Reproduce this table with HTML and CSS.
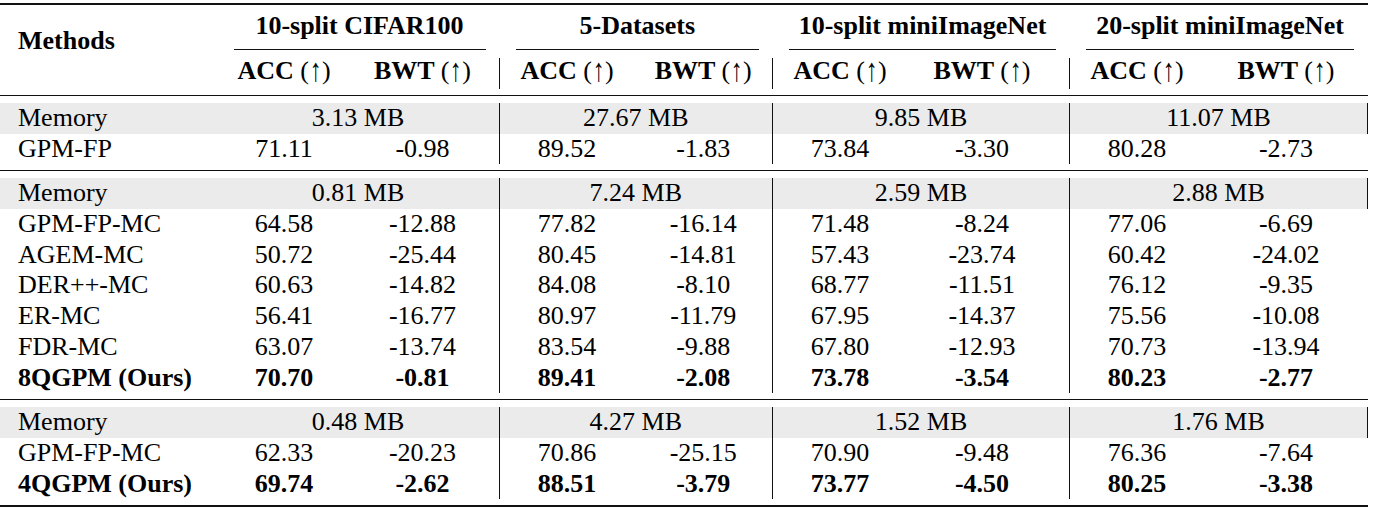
FILE: index.html
```html
<!DOCTYPE html>
<html lang="en">
<head>
<meta charset="utf-8">
<title>Results table</title>
<link rel="stylesheet" href="styles.css">
</head>
<body>
<div class="table">
  <div class="head">
    <div class="methods">Methods</div>
    <div class="title">10-split CIFAR100</div>
    <div class="title">5-Datasets</div>
    <div class="title">10-split miniImageNet</div>
    <div class="title">20-split miniImageNet</div>
    <div class="sub">ACC <span class="arr">(<span class="up">↑</span>)</span></div>
    <div class="sub sep shift-s">BWT <span class="arr">(<span class="up">↑</span>)</span></div>
    <div class="sub">ACC <span class="arr">(<span class="up">↑</span>)</span></div>
    <div class="sub sep">BWT <span class="arr">(<span class="up">↑</span>)</span></div>
    <div class="sub">ACC <span class="arr">(<span class="up">↑</span>)</span></div>
    <div class="sub sep shift-l">BWT <span class="arr">(<span class="up">↑</span>)</span></div>
    <div class="sub">ACC <span class="arr">(<span class="up">↑</span>)</span></div>
    <div class="sub">BWT <span class="arr">(<span class="up">↑</span>)</span></div>
  </div>

  <div class="group">
    <div class="row mem">
      <div class="m">Memory</div>
      <div class="c span2 sep">3.13 MB</div>
      <div class="c span2 sep">27.67 MB</div>
      <div class="c span2 sep">9.85 MB</div>
      <div class="c span2 sep">11.07 MB</div>
    </div>
    <div class="row">
      <div class="m">GPM-FP</div>
      <div class="c">71.11</div><div class="c sep shift-s">-0.98</div>
      <div class="c">89.52</div><div class="c sep">-1.83</div>
      <div class="c">73.84</div><div class="c sep shift-l">-3.30</div>
      <div class="c">80.28</div><div class="c">-2.73</div>
    </div>
  </div>

  <div class="group">
    <div class="row mem">
      <div class="m">Memory</div>
      <div class="c span2 sep">0.81 MB</div>
      <div class="c span2 sep">7.24 MB</div>
      <div class="c span2 sep">2.59 MB</div>
      <div class="c span2 sep">2.88 MB</div>
    </div>
    <div class="row">
      <div class="m">GPM-FP-MC</div>
      <div class="c">64.58</div><div class="c sep shift-s">-12.88</div>
      <div class="c">77.82</div><div class="c sep">-16.14</div>
      <div class="c">71.48</div><div class="c sep shift-l">-8.24</div>
      <div class="c">77.06</div><div class="c">-6.69</div>
    </div>
    <div class="row">
      <div class="m">AGEM-MC</div>
      <div class="c">50.72</div><div class="c sep shift-s">-25.44</div>
      <div class="c">80.45</div><div class="c sep">-14.81</div>
      <div class="c">57.43</div><div class="c sep shift-l">-23.74</div>
      <div class="c">60.42</div><div class="c">-24.02</div>
    </div>
    <div class="row">
      <div class="m">DER++-MC</div>
      <div class="c">60.63</div><div class="c sep shift-s">-14.82</div>
      <div class="c">84.08</div><div class="c sep">-8.10</div>
      <div class="c">68.77</div><div class="c sep shift-l">-11.51</div>
      <div class="c">76.12</div><div class="c">-9.35</div>
    </div>
    <div class="row">
      <div class="m">ER-MC</div>
      <div class="c">56.41</div><div class="c sep shift-s">-16.77</div>
      <div class="c">80.97</div><div class="c sep">-11.79</div>
      <div class="c">67.95</div><div class="c sep shift-l">-14.37</div>
      <div class="c">75.56</div><div class="c">-10.08</div>
    </div>
    <div class="row">
      <div class="m">FDR-MC</div>
      <div class="c">63.07</div><div class="c sep shift-s">-13.74</div>
      <div class="c">83.54</div><div class="c sep">-9.88</div>
      <div class="c">67.80</div><div class="c sep shift-l">-12.93</div>
      <div class="c">70.73</div><div class="c">-13.94</div>
    </div>
    <div class="row bold">
      <div class="m">8QGPM (Ours)</div>
      <div class="c">70.70</div><div class="c sep shift-s">-0.81</div>
      <div class="c">89.41</div><div class="c sep">-2.08</div>
      <div class="c">73.78</div><div class="c sep shift-l">-3.54</div>
      <div class="c">80.23</div><div class="c">-2.77</div>
    </div>
  </div>

  <div class="group">
    <div class="row mem">
      <div class="m">Memory</div>
      <div class="c span2 sep">0.48 MB</div>
      <div class="c span2 sep">4.27 MB</div>
      <div class="c span2 sep">1.52 MB</div>
      <div class="c span2 sep">1.76 MB</div>
    </div>
    <div class="row">
      <div class="m">GPM-FP-MC</div>
      <div class="c">62.33</div><div class="c sep shift-s">-20.23</div>
      <div class="c">70.86</div><div class="c sep">-25.15</div>
      <div class="c">70.90</div><div class="c sep shift-l">-9.48</div>
      <div class="c">76.36</div><div class="c">-7.64</div>
    </div>
    <div class="row bold">
      <div class="m">4QGPM (Ours)</div>
      <div class="c">69.74</div><div class="c sep shift-s">-2.62</div>
      <div class="c">88.51</div><div class="c sep">-3.79</div>
      <div class="c">73.77</div><div class="c sep shift-l">-4.50</div>
      <div class="c">80.25</div><div class="c">-3.38</div>
    </div>
  </div>
</div>
</body>
</html>
```

FILE: styles.css
```css
body {
  margin: 0;
  background: #ffffff;
  color: #000000;
  font-family: "Liberation Serif", serif;
  font-size: 26px;
}

.table {
  --cols: 217.5px 133px 149px 135px 138.5px 134px 163px 134px 1fr;
  width: 1368px;
  margin-top: 3px;
  border-top: 2px solid #111111;
  border-bottom: 2px solid #111111;
}

.head {
  display: grid;
  grid-template-columns: var(--cols);
  grid-template-rows: 45px 45px;
}

.methods {
  grid-row: 1 / 3;
  padding: 21px 0 0 18px;
  line-height: 30px;
  font-weight: bold;
}

.title {
  grid-column: span 2;
  margin: 0 14px 0 16px;
  height: 45px;
  box-sizing: border-box;
  padding-top: 6px;
  line-height: 29px;
  border-bottom: 1px solid #111111;
  text-align: center;
  font-weight: bold;
  white-space: nowrap;
}

.sub {
  margin-top: 8px;
  height: 31px;
  line-height: 25px;
  text-align: center;
  font-weight: bold;
  white-space: nowrap;
}

.arr {
  font-weight: normal;
}

.up {
  display: inline-block;
  transform: scale(0.9, 1.25);
}

.group {
  border-top: 1px solid #111111;
  padding: 7px 0 6px;
}

.row {
  display: grid;
  grid-template-columns: var(--cols);
  height: 30.7px;
  line-height: 30.7px;
}

.row.mem {
  background: #ebebeb;
}

.row.bold {
  font-weight: bold;
}

.m {
  padding-left: 18px;
  white-space: nowrap;
}

.c {
  text-align: center;
  white-space: nowrap;
}

.span2 {
  grid-column: span 2;
}

.sep {
  border-right: 1px solid #111111;
}

.shift-s {
  padding-right: 4px;
}

.shift-l {
  padding-right: 12px;
}
```
